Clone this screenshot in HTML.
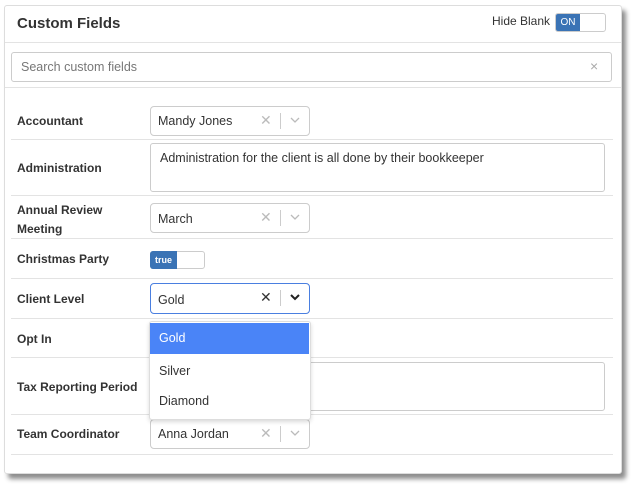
<!DOCTYPE html><html><head><style>
body{margin:0;width:636px;height:490px;background:#fff;font-family:"Liberation Sans",sans-serif;position:relative;overflow:hidden}
.a{position:absolute}
.card{left:4px;top:5px;width:616px;height:467px;border:1px solid #ddd;border-radius:3px;box-shadow:4px 5px 5px rgba(0,0,0,.45);background:#fff}
.lbl{left:17px;font-size:12px;font-weight:bold;color:#333}
.sep{left:11px;width:602px;height:1px;background:#e3e3e3}
.sel{left:150px;width:158px;height:28px;border:1px solid #ccc;border-radius:4px;font-size:12.5px;color:#333;background:#fff}
.sel .t{position:absolute;left:7px;top:7px}
.sel .x{position:absolute;left:109px;top:5px;color:#bbb;font-size:14px}
.sel .d{position:absolute;left:129px;top:6px;width:1px;height:16px;background:#ccc}
.sel .c{position:absolute;left:138px;top:6px}
.ta{left:150px;width:453px;border:1px solid #ccc;border-radius:3px;background:#fff}
</style></head><body>
<div class="a card"></div>
<div class="a" style="left:17px;top:15px;font-size:15px;font-weight:bold;color:#333">Custom Fields</div>
<div class="a" style="left:492px;top:14px;font-size:12px;color:#333">Hide Blank</div>
<div class="a" style="left:555px;top:13px;width:49px;height:17px;border:1px solid #ccc;border-radius:3px;background:#fff"></div>
<div class="a" style="left:556px;top:14px;width:24px;height:17px;background:#3a73b5;color:#fff;font-size:10px;line-height:17px;text-align:center;border-radius:2px 0 0 2px">ON</div>
<div class="a" style="left:5px;top:42px;width:616px;height:1px;background:#e3e3e3"></div>
<div class="a" style="left:11px;top:52px;width:599px;height:28px;border:1px solid #ccc;border-radius:3px"></div>
<div class="a" style="left:21px;top:60px;font-size:12.5px;color:#777">Search custom fields</div>
<div class="a" style="left:590px;top:58px;font-size:14px;color:#aaa">×</div>
<div class="a" style="left:5px;top:87px;width:616px;height:1px;background:#e3e3e3"></div>

<div class="a lbl" style="top:114px">Accountant</div>
<div class="a sel" style="top:106px"><span class="t">Mandy Jones</span><span class="x">✕</span><span class="d"></span><svg class="c" width="12" height="14" viewBox="0 0 12 14"><path d="M2 5l4 4 4-4" stroke="#bbb" fill="none" stroke-width="1.3"/></svg></div>
<div class="a sep" style="top:139px"></div>
<div class="a lbl" style="top:161px">Administration</div>
<div class="a ta" style="top:143px;height:47px"></div>
<div class="a" style="left:160px;top:151px;font-size:12.5px;color:#333">Administration for the client is all done by their bookkeeper</div>
<div class="a sep" style="top:195px"></div>
<div class="a lbl" style="top:201px;line-height:19px">Annual Review<br>Meeting</div>
<div class="a sel" style="top:203px"><span class="t" style="top:8px">March</span><span class="x">✕</span><span class="d"></span><svg class="c" width="12" height="14" viewBox="0 0 12 14"><path d="M2 5l4 4 4-4" stroke="#bbb" fill="none" stroke-width="1.3"/></svg></div>
<div class="a sep" style="top:238px"></div>
<div class="a lbl" style="top:252px">Christmas Party</div>
<div class="a" style="left:150px;top:251px;width:53px;height:16px;border:1px solid #ccc;border-radius:3px"></div>
<div class="a" style="left:150px;top:251px;width:27px;height:18px;background:#3a73b5;color:#fff;font-size:9px;line-height:18px;text-align:center;border-radius:3px 0 0 3px;font-weight:bold">true</div>
<div class="a sep" style="top:278px"></div>
<div class="a lbl" style="top:292px">Client Level</div>
<div class="a sel" style="top:283px;border:1px solid #4a7fe0;height:29px"><span class="t" style="top:9px">Gold</span><span class="x" style="color:#333">✕</span><span class="d"></span><svg class="c" width="12" height="14" viewBox="0 0 12 14"><path d="M2 5l4 4 4-4" stroke="#222" fill="none" stroke-width="2"/></svg></div>
<div class="a sep" style="top:318px"></div>
<div class="a lbl" style="top:332px">Opt In</div>
<div class="a sep" style="top:357px"></div>
<div class="a ta" style="top:362px;height:47px"></div>
<div class="a lbl" style="top:380px">Tax Reporting Period</div>
<div class="a sep" style="top:414px"></div>
<div class="a lbl" style="top:427px">Team Coordinator</div>
<div class="a sel" style="top:419px"><span class="t">Anna Jordan</span><span class="x">✕</span><span class="d"></span><svg class="c" width="12" height="14" viewBox="0 0 12 14"><path d="M2 5l4 4 4-4" stroke="#bbb" fill="none" stroke-width="1.3"/></svg></div>
<div class="a sep" style="top:454px"></div>

<div class="a" style="left:149px;top:321px;width:160px;height:97px;background:#fff;border:1px solid #ddd;border-radius:3px;box-shadow:0 2px 4px rgba(0,0,0,.15)"></div>
<div class="a" style="left:150px;top:323px;width:159px;height:31px;background:#4a84f7;color:#fff;font-size:12.5px;line-height:31px;text-indent:9px">Gold</div>
<div class="a" style="left:159px;top:364px;font-size:12.5px;color:#333">Silver</div>
<div class="a" style="left:159px;top:394px;font-size:12.5px;color:#333">Diamond</div>
</body></html>
